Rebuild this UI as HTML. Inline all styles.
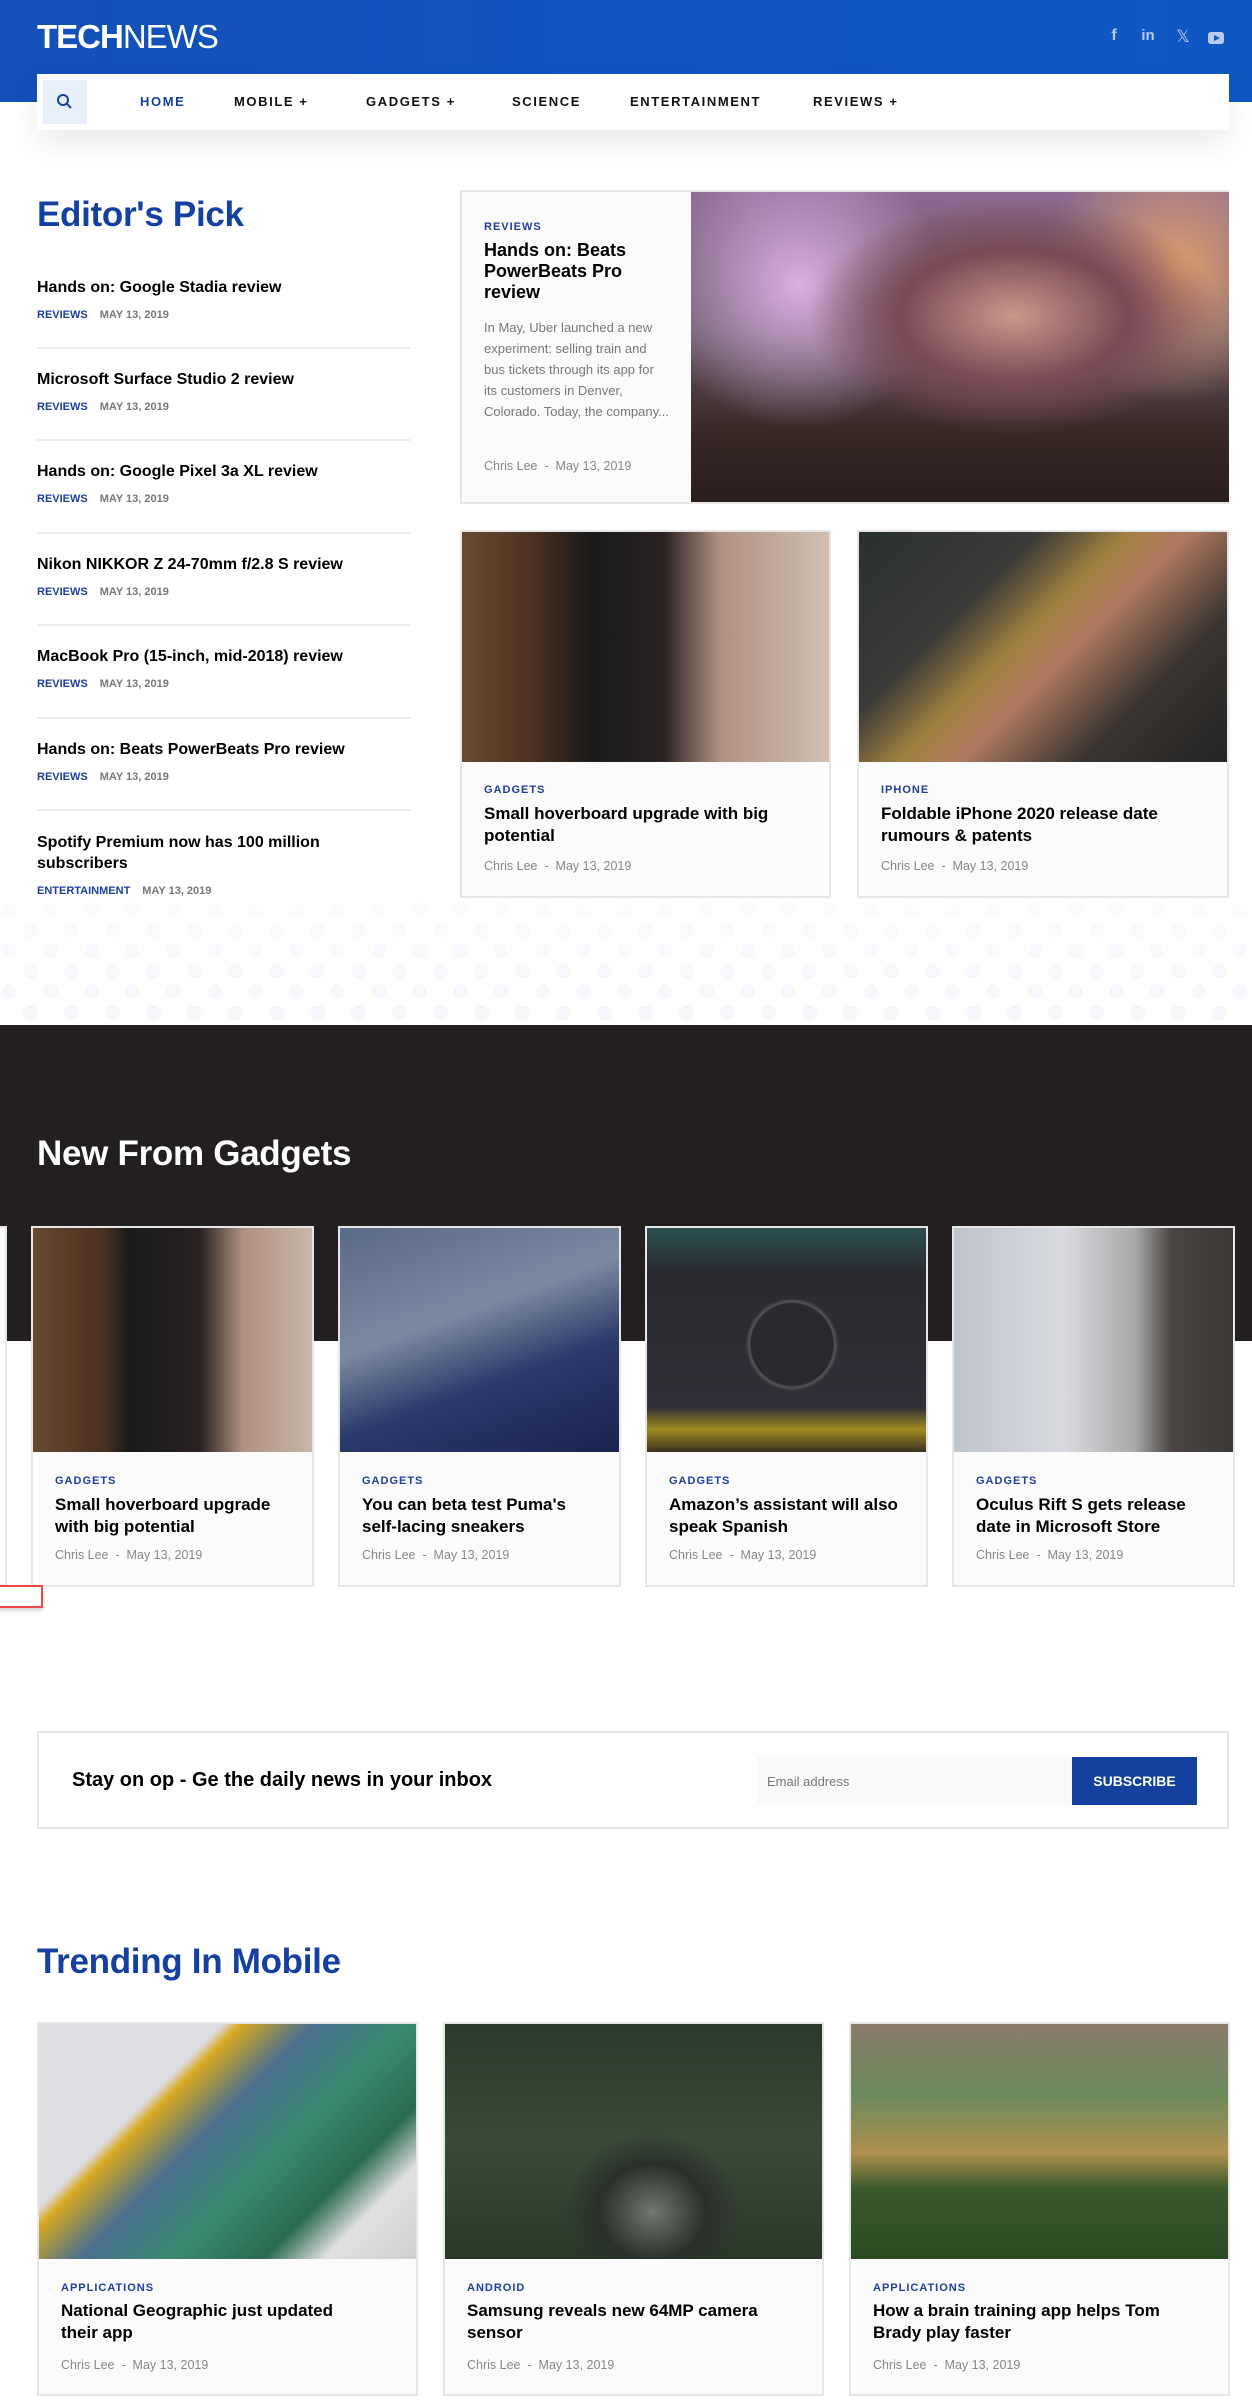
<!DOCTYPE html>
<html><head><meta charset="utf-8">
<style>
*{margin:0;padding:0;box-sizing:border-box}
body{width:1252px;height:2404px;position:relative;background:#fff;font-family:"Liberation Sans",sans-serif;overflow:hidden;color:#000}
.a{position:absolute}
.blue{color:#1440a0}
.hdr{left:0;top:0;width:1252px;height:102px;background:linear-gradient(90deg,#1350b8,#0f58c4)}
.logo{left:37px;top:18px;color:#fff;font-size:33px;letter-spacing:-1px}
.nav{left:37px;top:74px;width:1192px;height:56px;background:#fff;box-shadow:0 15px 30px rgba(0,0,0,.08)}
.nav span{position:absolute;top:20px;font-size:13px;font-weight:bold;letter-spacing:1.6px;color:#111}
.srch{left:6px;top:6px;width:44px;height:44px;background:#eaf0fb}
.soc{top:27px;width:20px;height:24px;color:#b9cdef;font-size:16px;font-weight:bold;text-align:center}
h2{position:absolute;font-size:35px;font-weight:bold;letter-spacing:-.3px}
.li{left:37px;width:373px}
.li b{display:block;font-size:16px;line-height:21px}
.li i{display:block;font-style:normal;font-size:11px;font-weight:bold;margin-top:11px;color:#777}
.li i em{font-style:normal;color:#1d3fa0;margin-right:12px}
.sep{left:37px;width:373px;height:2px;background:#ececec}
.card{background:#fbfbfb;border:2px solid #e6e6e6}
.img{position:absolute;left:0;top:0;width:100%}
.cat{position:absolute;font-size:11px;font-weight:bold;letter-spacing:1px;color:#1d3fa0}
.tt{position:absolute;font-size:17px;font-weight:bold;line-height:22px;color:#000}
.mt{position:absolute;font-size:12.5px;color:#888}
</style></head><body>
<div class="a hdr"></div>
<div class="a logo"><b>TECH</b>NEWS</div>
<div class="a soc" style="left:1104px">f</div>
<div class="a soc" style="left:1138px;font-size:15px">in</div>
<div class="a soc" style="left:1173px;font-weight:normal;font-size:17px">𝕏</div>
<div class="a" style="left:1208px;top:32px;width:16px;height:12px;background:#b9cdef;border-radius:3px"><div style="position:absolute;left:6px;top:3px;border-left:6px solid #1058c4;border-top:3px solid transparent;border-bottom:3px solid transparent"></div></div>
<div class="a nav">
<div class="a srch"><svg width="44" height="44" viewBox="0 0 44 44"><circle cx="20" cy="20" r="5" fill="none" stroke="#1440a0" stroke-width="2"/><line x1="24" y1="24" x2="28" y2="28" stroke="#1440a0" stroke-width="2"/></svg></div>
<span style="left:103px;color:#1440a0">HOME</span>
<span style="left:197px">MOBILE +</span>
<span style="left:329px">GADGETS +</span>
<span style="left:475px">SCIENCE</span>
<span style="left:593px">ENTERTAINMENT</span>
<span style="left:776px">REVIEWS +</span>
</div>

<h2 class="blue" style="left:37px;top:195px">Editor's Pick</h2>
<div class="a li" style="top:277px"><b>Hands on: Google Stadia review</b><i><em>REVIEWS</em>MAY 13, 2019</i></div>
<div class="a sep" style="top:347px"></div>
<div class="a li" style="top:369px"><b>Microsoft Surface Studio 2 review</b><i><em>REVIEWS</em>MAY 13, 2019</i></div>
<div class="a sep" style="top:439px"></div>
<div class="a li" style="top:461px"><b>Hands on: Google Pixel 3a XL review</b><i><em>REVIEWS</em>MAY 13, 2019</i></div>
<div class="a sep" style="top:532px"></div>
<div class="a li" style="top:554px"><b>Nikon NIKKOR Z 24-70mm f/2.8 S review</b><i><em>REVIEWS</em>MAY 13, 2019</i></div>
<div class="a sep" style="top:624px"></div>
<div class="a li" style="top:646px"><b>MacBook Pro (15-inch, mid-2018) review</b><i><em>REVIEWS</em>MAY 13, 2019</i></div>
<div class="a sep" style="top:717px"></div>
<div class="a li" style="top:739px"><b>Hands on: Beats PowerBeats Pro review</b><i><em>REVIEWS</em>MAY 13, 2019</i></div>
<div class="a sep" style="top:809px"></div>
<div class="a li" style="top:832px"><b>Spotify Premium now has 100 million subscribers</b><i><em>ENTERTAINMENT</em>MAY 13, 2019</i></div>

<div class="a" style="left:0;top:900px;width:1252px;height:125px;background-image:radial-gradient(circle,#f5f6fb 7px,transparent 8px),radial-gradient(circle,#f5f6fb 7px,transparent 8px);background-size:41px 41px;background-position:10px 10px,30px 30px;-webkit-mask-image:linear-gradient(180deg,rgba(0,0,0,.3),#000)"></div>

<div class="a card" style="left:460px;top:190px;width:769px;height:314px">
<div class="a" style="left:229px;top:0;width:538px;height:310px;background:radial-gradient(ellipse at 60% 40%,#c89a8a 0,#7a4a55 25%,transparent 45%),radial-gradient(circle at 20% 30%,#d8b0e0 0,transparent 30%),radial-gradient(circle at 90% 25%,#e0a070 0,transparent 25%),linear-gradient(180deg,#8a6a90 0,#6a5a6a 45%,#3a2a28 75%,#2a1e1c 100%)"></div>
<div class="cat" style="left:22px;top:29px">REVIEWS</div>
<div class="tt" style="left:22px;top:48px;width:190px;font-size:18px;line-height:21px">Hands on: Beats PowerBeats Pro review</div>
<div class="mt" style="left:22px;top:125px;width:185px;font-size:13px;line-height:21px;color:#777">In May, Uber launched a new experiment: selling train and bus tickets through its app for its customers in Denver, Colorado. Today, the company...</div>
<div class="mt" style="left:22px;top:267px">Chris Lee &nbsp;-&nbsp; May 13, 2019</div>
</div>

<div class="a card" style="left:460px;top:530px;width:371px;height:368px">
<div class="img" style="height:230px;background:linear-gradient(90deg,#6a4a30 0,#4a3020 20%,#1a1a1a 35%,#2a2222 55%,#b09080 70%,#d0c0b0 100%)"></div>
<div class="cat" style="left:22px;top:252px">GADGETS</div>
<div class="tt" style="left:22px;top:271px;width:330px">Small hoverboard upgrade with big potential</div>
<div class="mt" style="left:22px;top:327px">Chris Lee &nbsp;-&nbsp; May 13, 2019</div>
</div>
<div class="a card" style="left:857px;top:530px;width:372px;height:368px">
<div class="img" style="height:230px;background:linear-gradient(135deg,#2a3030 0,#3a3a38 30%,#a08040 45%,#b07a60 55%,#3a3530 75%,#252525 100%)"></div>
<div class="cat" style="left:22px;top:252px">IPHONE</div>
<div class="tt" style="left:22px;top:271px;width:330px">Foldable iPhone 2020 release date rumours &amp; patents</div>
<div class="mt" style="left:22px;top:327px">Chris Lee &nbsp;-&nbsp; May 13, 2019</div>
</div>

<div class="a" style="left:0;top:1025px;width:1252px;height:316px;background:#231f20"></div>
<h2 style="left:37px;top:1134px;color:#fff">New From Gadgets</h2>

<div class="a card" style="left:-276px;top:1226px;width:283px;height:361px"></div>
<div class="a card" style="left:31px;top:1226px;width:283px;height:361px">
<div class="img" style="height:224px;background:linear-gradient(90deg,#6a4a30 0,#4a3020 25%,#1a1a1a 35%,#2a2222 60%,#b09080 75%,#c8b8a8 100%)"></div>
<div class="cat" style="left:22px;top:247px">GADGETS</div>
<div class="tt" style="left:22px;top:266px;width:235px">Small hoverboard upgrade with big potential</div>
<div class="mt" style="left:22px;top:320px">Chris Lee &nbsp;-&nbsp; May 13, 2019</div>
</div>
<div class="a card" style="left:338px;top:1226px;width:283px;height:361px">
<div class="img" style="height:224px;background:linear-gradient(160deg,#5a6a8a 0,#7a8aa0 40%,#2a3a6a 65%,#1a2450 100%)"></div>
<div class="cat" style="left:22px;top:247px">GADGETS</div>
<div class="tt" style="left:22px;top:266px;width:225px">You can beta test Puma's self-lacing sneakers</div>
<div class="mt" style="left:22px;top:320px">Chris Lee &nbsp;-&nbsp; May 13, 2019</div>
</div>
<div class="a card" style="left:645px;top:1226px;width:283px;height:361px">
<div class="img" style="height:224px;background:radial-gradient(circle at 52% 52%,#2a2a2e 0,#2a2a2e 22%,#555 23%,transparent 25%),linear-gradient(180deg,#2a5050 0,#2a2a30 20%,#303038 80%,#a08a20 90%,#3a3020 100%)"></div>
<div class="cat" style="left:22px;top:247px">GADGETS</div>
<div class="tt" style="left:22px;top:266px;width:235px">Amazon’s assistant will also speak Spanish</div>
<div class="mt" style="left:22px;top:320px">Chris Lee &nbsp;-&nbsp; May 13, 2019</div>
</div>
<div class="a card" style="left:952px;top:1226px;width:283px;height:361px">
<div class="img" style="height:224px;background:linear-gradient(90deg,#c0c4cc 0,#d8dadf 40%,#a8a8a8 65%,#4a4442 78%,#3a3836 100%)"></div>
<div class="cat" style="left:22px;top:247px">GADGETS</div>
<div class="tt" style="left:22px;top:266px;width:235px">Oculus Rift S gets release date in Microsoft Store</div>
<div class="mt" style="left:22px;top:320px">Chris Lee &nbsp;-&nbsp; May 13, 2019</div>
</div>
<div class="a" style="left:-4px;top:1585px;width:47px;height:23px;border:2px solid #f04848;box-shadow:0 2px 4px rgba(0,0,0,.2)"></div>

<div class="a" style="left:37px;top:1731px;width:1192px;height:98px;border:2px solid #e6e6e6;background:#fff">
<div class="a" style="left:33px;top:36px;font-size:20px;font-weight:bold">Stay on op - Ge the daily news in your inbox</div>
<div class="a" style="left:718px;top:24px;width:315px;height:48px;background:#fafafa;font-size:13px;color:#777;padding:17px 0 0 10px">Email address</div>
<div class="a" style="left:1033px;top:24px;width:125px;height:48px;background:#1440a0;color:#fff;font-size:14px;font-weight:bold;text-align:center;line-height:48px">SUBSCRIBE</div>
</div>

<h2 class="blue" style="left:37px;top:1942px">Trending In Mobile</h2>
<div class="a card" style="left:37px;top:2022px;width:381px;height:374px">
<div class="img" style="height:235px;background:linear-gradient(135deg,#dcdde0 0,#dcdde0 30%,#d8a820 33%,#4a7090 45%,#3a8a70 60%,#2a6a50 75%,#e0e0e0 85%,#cfcfcf 100%)"></div>
<div class="cat" style="left:22px;top:258px">APPLICATIONS</div>
<div class="tt" style="left:22px;top:276px;width:300px">National Geographic just updated their app</div>
<div class="mt" style="left:22px;top:334px">Chris Lee &nbsp;-&nbsp; May 13, 2019</div>
</div>
<div class="a card" style="left:443px;top:2022px;width:381px;height:374px">
<div class="img" style="height:235px;background:radial-gradient(ellipse at 55% 80%,#707870 0,#2a302a 18%,transparent 30%),linear-gradient(180deg,#2a3a2a 0,#3a4a38 50%,#2a3828 100%)"></div>
<div class="cat" style="left:22px;top:258px">ANDROID</div>
<div class="tt" style="left:22px;top:276px;width:320px">Samsung reveals new 64MP camera sensor</div>
<div class="mt" style="left:22px;top:334px">Chris Lee &nbsp;-&nbsp; May 13, 2019</div>
</div>
<div class="a card" style="left:849px;top:2022px;width:381px;height:374px">
<div class="img" style="height:235px;background:linear-gradient(180deg,#8a7a6a 0,#6a8a5a 30%,#b09050 55%,#3a5a2a 70%,#2a4a22 100%)"></div>
<div class="cat" style="left:22px;top:258px">APPLICATIONS</div>
<div class="tt" style="left:22px;top:276px;width:310px">How a brain training app helps Tom Brady play faster</div>
<div class="mt" style="left:22px;top:334px">Chris Lee &nbsp;-&nbsp; May 13, 2019</div>
</div>
</body></html>
